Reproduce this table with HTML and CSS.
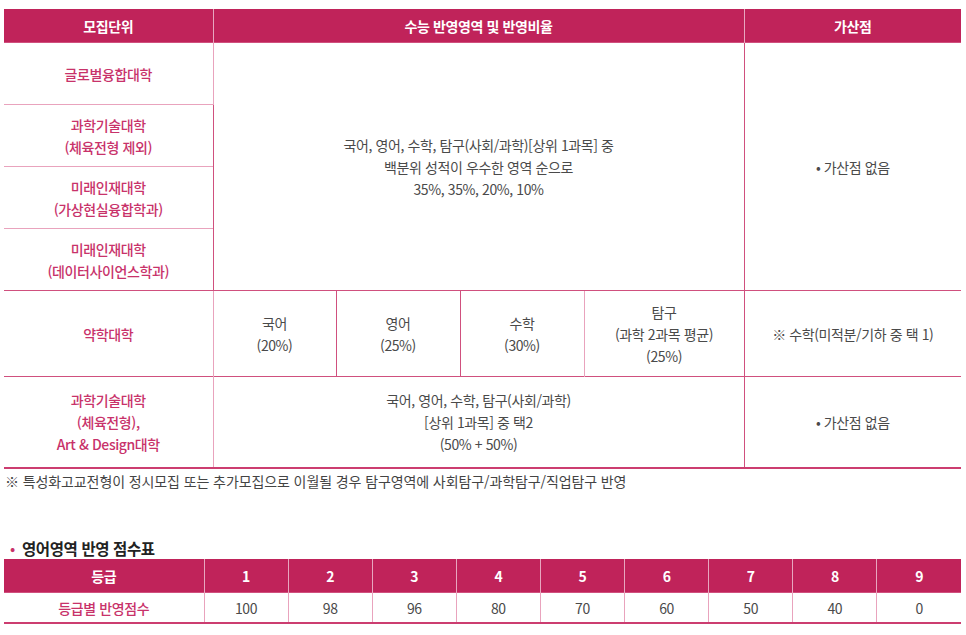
FILE: index.html
```html
<!DOCTYPE html>
<html lang="ko">
<head>
<meta charset="utf-8">
<link rel="stylesheet" href="styles.css">
</head>
<body>
<div class="page">
  <table class="main">
    <colgroup>
      <col class="c1"><col class="s1"><col class="s2"><col class="s3"><col class="s4"><col class="c3">
    </colgroup>
    <thead>
      <tr class="head">
        <th>모집단위</th>
        <th colspan="4">수능 반영영역 및 반영비율</th>
        <th>가산점</th>
      </tr>
    </thead>
    <tbody>
      <tr class="r62">
        <td class="unit light-b">글로벌융합대학</td>
        <td colspan="4" rowspan="4" class="txt">국어, 영어, 수학, 탐구(사회/과학)[상위 1과목] 중<br>백분위 성적이 우수한 영역 순으로<br>35%, 35%, 20%, 10%</td>
        <td rowspan="4" class="txt">• 가산점 없음</td>
      </tr>
      <tr class="r62"><td class="unit light-b">과학기술대학<br>(체육전형 제외)</td></tr>
      <tr class="r62"><td class="unit light-b">미래인재대학<br>(가상현실융합학과)</td></tr>
      <tr class="r62"><td class="unit">미래인재대학<br>(데이터사이언스학과)</td></tr>
      <tr class="r86">
        <td class="unit">약학대학</td>
        <td class="txt">국어<br>(20%)</td>
        <td class="txt">영어<br>(25%)</td>
        <td class="txt">수학<br>(30%)</td>
        <td class="txt light-l">탐구<br>(과학 2과목 평균)<br>(25%)</td>
        <td class="txt">※ 수학(미적분/기하 중 택 1)</td>
      </tr>
      <tr class="r92 last">
        <td class="unit">과학기술대학<br>(체육전형),<br>Art &amp; Design대학</td>
        <td colspan="4" class="txt">국어, 영어, 수학, 탐구(사회/과학)<br>[상위 1과목] 중 택2<br>(50% + 50%)</td>
        <td class="txt">• 가산점 없음</td>
      </tr>
    </tbody>
  </table>
  <p class="note">※ 특성화고교전형이 정시모집 또는 추가모집으로 이월될 경우 탐구영역에 사회탐구/과학탐구/직업탐구 반영</p>
  <h3 class="title"><span class="dot">•</span>영어영역 반영 점수표</h3>
  <table class="grade">
    <colgroup>
      <col class="g0"><col span="9" class="gn">
    </colgroup>
    <thead>
      <tr class="head">
        <th>등급</th><th>1</th><th>2</th><th>3</th><th>4</th><th>5</th><th>6</th><th>7</th><th>8</th><th>9</th>
      </tr>
    </thead>
    <tbody>
      <tr class="last">
        <td class="unit">등급별 반영점수</td><td class="txt">100</td><td class="txt">98</td><td class="txt">96</td><td class="txt">80</td><td class="txt">70</td><td class="txt">60</td><td class="txt">50</td><td class="txt">40</td><td class="txt">0</td>
      </tr>
    </tbody>
  </table>
</div>
</body>
</html>
```
FILE: styles.css
```css
html, body {
  margin: 0;
  padding: 0;
  background: #ffffff;
}
body {
  font-family: "Noto Sans CJK KR", "Noto Sans", sans-serif;
  font-size: 14px;
  color: #4a4a4a;
  letter-spacing: -0.4px;
}
.page {
  padding: 9px 5px 0 4px;
}
table {
  border-collapse: collapse;
  table-layout: fixed;
  width: 957px;
}
.main .c1 { width: 209px; }
.main .s1 { width: 123px; }
.main .s2 { width: 124px; }
.main .s3 { width: 124px; }
.main .s4 { width: 160px; }
.main .c3 { width: 217px; }

th, td {
  text-align: center;
  vertical-align: middle;
  padding: 0;
  line-height: 22px;
}
.head th {
  background: #c0235a;
  color: #ffffff;
  font-weight: bold;
  height: 33px;
  border-left: 1px solid #e7a7bf;
}
.head th:first-child { border-left: none; }
tbody td {
  border-top: 1px solid #d0507e;
  border-left: 1px solid #d0507e;
}
tbody td:first-child { border-left: none; }
td.unit {
  color: #c8326a;
  font-weight: 500;
  border-right: 1px solid #e9a3bd;
}
td.light-b { border-bottom: 1px solid #e9a3bd; }
td.light-l { border-left: 1px solid #e9a3bd; }
td.txt { color: #4a4a4a; }
.r62 td { height: 61px; }
.r86 td { height: 85px; }
.r92 td { height: 90px; }
tr.last td { border-bottom: 2px solid #cc3d70; }
.note {
  margin: 2px 0 0 1px;
  line-height: 20px;
  font-size: 14px;
  letter-spacing: -0.1px;
  color: #444;
}
.title {
  margin: 46px 0 0 0;
  font-size: 15.5px;
  font-weight: bold;
  color: #222;
  line-height: 22px;
}
.dot {
  color: #c8326a;
  display: inline-block;
  width: 18px;
  padding-left: 6px;
  box-sizing: border-box;
  font-weight: normal;
}
.grade .g0 { width: 200px; }
.grade .head th { height: 33px; }
.grade td { height: 29px; border-left-color: #e9a3bd; }
.grade td.unit { border-right: 1px solid #e9a3bd; }
```
